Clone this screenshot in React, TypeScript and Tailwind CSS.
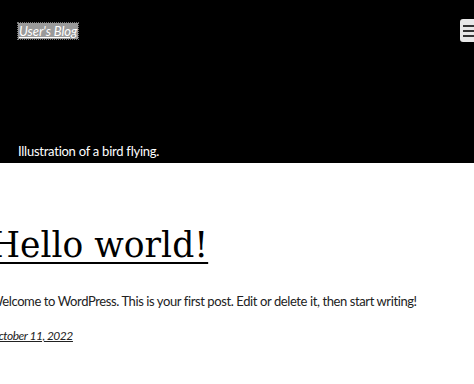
import React from 'react';

const App = () => {
  return (
    <div className="w-[474px] h-[384px] overflow-hidden bg-white font-['Lato',sans-serif]">
      <header className="h-[163px] bg-black flex flex-col justify-between pl-[18px] pt-[23px] pb-[3px]">
        <div className="flex items-start justify-between">
          <a
            href="#"
            className="bg-[#9a9a9a] text-white italic underline text-[13px] tracking-[-0.05px] leading-[16px] px-[1px] outline-1 outline-dotted outline-[#777]"
          >
            User's Blog
          </a>
          <button className="mt-[-4px] w-[14px] h-[23px] bg-[#e8e8e8] rounded-l-[3px] flex flex-col justify-center gap-[3px] pl-[3px]">
            <span className="block w-[11px] h-[2px] bg-[#333]" />
            <span className="block w-[11px] h-[2px] bg-[#333]" />
            <span className="block w-[11px] h-[2px] bg-[#333]" />
          </button>
        </div>
        <p className="text-white text-[13px] tracking-[-0.25px] leading-[18px]">Illustration of a bird flying.</p>
      </header>
      <main className="ml-[-10px] pt-[60px]">
        <h1 className="font-['DejaVu_Serif',serif] text-[34.5px] leading-[44px] text-black whitespace-nowrap underline underline-offset-[5px] decoration-[2px]">
          <a href="#">Hello world!</a>
        </h1>
        <p className="mt-[24px] text-[13px] tracking-[-0.4px] leading-[20px] text-[#222] whitespace-nowrap">
          Welcome to WordPress. This is your first post. Edit or delete it, then start writing!
        </p>
        <p className="mt-[15px] text-[12px] tracking-[-0.5px] leading-[20px] italic underline text-[#222]">
          <a href="#">October 11, 2022</a>
        </p>
      </main>
    </div>
  );
};

export default App;
